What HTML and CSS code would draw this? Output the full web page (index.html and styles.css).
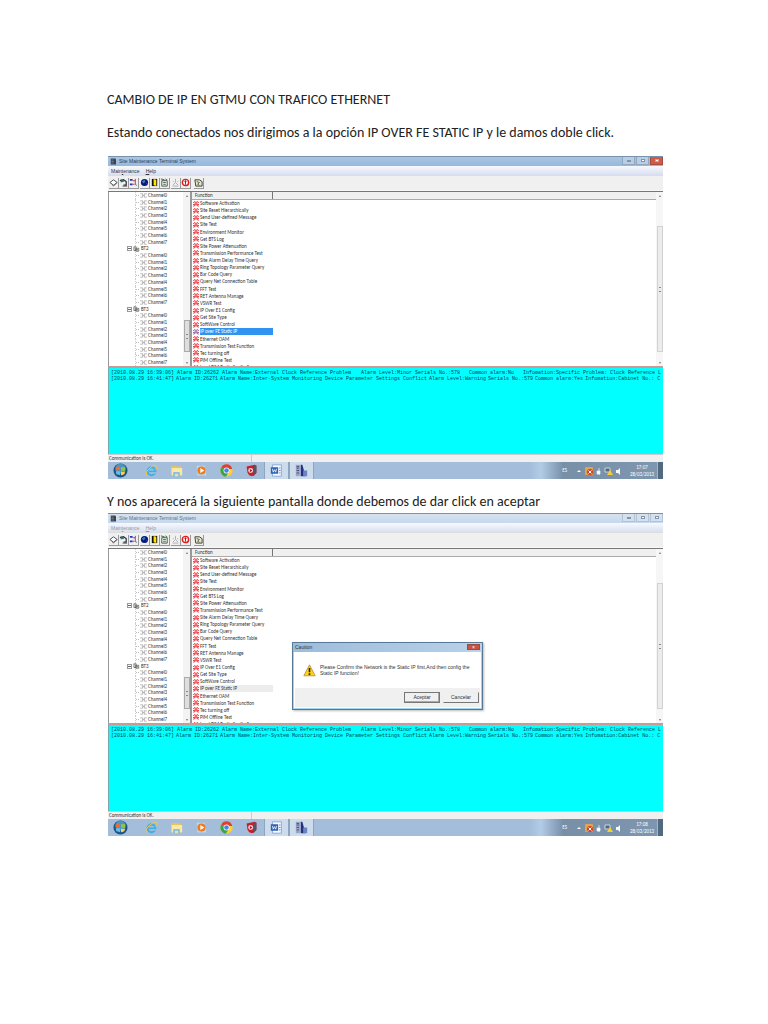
FILE: index.html
```
<!DOCTYPE html>
<html lang="es">
<head>
<meta charset="utf-8">
<meta name="viewport" content="width=device-width, initial-scale=1">
<title>Cambio de IP en GTMU</title>
<link rel="stylesheet" href="styles.css">
</head>
<body>
<svg class="defs" aria-hidden="true">
  <symbol id="app" viewBox="0 0 8 8"><path d="M1 0h6l1 1v7H1z" fill="#394450"/><path d="M2 2h3M2 4h3M2 6h3" stroke="#93a1ac" stroke-width=".7"/></symbol>
  <symbol id="fn" viewBox="0 0 8 8"><path d="M.5 2.500Q1 .8 3 .8M5 .8Q7 .8 7.500 2.500M1 7.500L3.500 2h1L7 7.500M2.500 5.200h3M.5 4v1.500M7.500 4v1.500" fill="none" stroke="currentColor" stroke-width="1.300"/></symbol>
  <symbol id="chan" viewBox="0 0 8 6"><path d="M0 1h3M0 5h3M5 1h3M5 5h3M3 3h2M3 1v4M5 1v4" fill="none" stroke="#9a9a9a" stroke-width=".8"/></symbol>
  <symbol id="site" viewBox="0 0 8 8"><path d="M.5 1h3v5h-3zM3 3h4v4H3z" fill="#ddd" stroke="#444" stroke-width=".8"/><path d="M4 5h2" stroke="#222" stroke-width=".7"/></symbol>
  <symbol id="t0" viewBox="0 0 10 10"><path d="M1 5l4-3 4 3-4 3z" fill="#fff" stroke="#444"/><path d="M3 7l2 2 4-4" fill="none" stroke="#667"/></symbol>
  <symbol id="t1" viewBox="0 0 10 10"><path d="M1 3l4-1 3 2v4H5" fill="none" stroke="#333" stroke-width="1.4"/><path d="M2 1l4 3-4 1z" fill="#178"/><path d="M4 9h5" stroke="#444"/></symbol>
  <symbol id="t2" viewBox="0 0 10 10"><path d="M1 2h3M1 7h3" stroke="#23c" stroke-width="2"/><path d="M4 3h3M4 7h2" stroke="#d33" stroke-width="1.2"/><path d="M7 1v7M8 8h1" stroke="#557"/></symbol>
  <symbol id="t3" viewBox="0 0 10 10"><circle cx="5" cy="5" r="4" fill="#0a1680"/><path d="M2 4l3-2 1 2-2 2zM7 6l1-1v2z" fill="#38a"/></symbol>
  <symbol id="t4" viewBox="0 0 10 10"><path d="M2 1h6v8H2z" fill="#111"/><path d="M4 1l3 1v7l-3-1z" fill="#ffe400"/></symbol>
  <symbol id="t5" viewBox="0 0 10 10"><path d="M2 3h6v6H2z" fill="#efe" stroke="#444"/><path d="M1 1l4 1M6 1l2 1M3.500 5h3M3.500 7h3" stroke="#363"/></symbol>
  <symbol id="t6" viewBox="0 0 10 10"><path d="M5 1v4M2 8l3-3 3 3M2 4h1M7 4h1M2 9h6" stroke="#aaa" fill="none"/></symbol>
  <symbol id="t7" viewBox="0 0 10 10"><circle cx="5" cy="5" r="3.500" fill="#fff" stroke="#e01c1c" stroke-width="1.600"/><path d="M5 2.500v5M3.800 4h2.400" stroke="#c00"/></symbol>
  <symbol id="t8" viewBox="0 0 10 10"><path d="M1 2h5l3 2v5H2z" fill="#e8e8c8" stroke="#333"/><path d="M3 4l3 1-2 2 2 1" fill="none" stroke="#554"/></symbol>
  <symbol id="start" viewBox="0 0 16 16"><circle cx="8" cy="8" r="7.500" fill="#1b5688"/><circle cx="8" cy="6" r="5.500" fill="#4c94c4"/><path d="M3 5q2-2 4.500-1v4Q5 7 3 8z" fill="#ee6b35"/><path d="M8.500 4q2 1 4.500 0v4q-2 1-4.500 0z" fill="#8ec63f"/><path d="M3 9q2-1 4.500 0v4Q5 12 3.500 12z" fill="#63bdf0"/><path d="M8.500 9q2 1 4.500 0l-1 3q-2 1-3.500 1z" fill="#fbd04a"/></symbol>
  <symbol id="ie" viewBox="0 0 16 16"><circle cx="8" cy="9" r="4.800" fill="none" stroke="#42aee6" stroke-width="2.600"/><path d="M4 9h9" stroke="#42aee6" stroke-width="2"/><path d="M10 11h5" stroke="#a7c1dc" stroke-width="1.600"/><path d="M2 14Q0 10 6 5t8-3q2 1-1 5" fill="none" stroke="#f0c944" stroke-width="1.200"/></symbol>
  <symbol id="folder" viewBox="0 0 16 16"><path d="M1 3l6-1 1 1h6v11H2z" fill="#e9c35d"/><path d="M2 5h13v9H2z" fill="#fbe9a6"/><path d="M4 10h8v5H4z" fill="#77bde4"/><path d="M6 12h4v3H6z" fill="#f5e09a"/></symbol>
  <symbol id="play" viewBox="0 0 16 16"><path d="M2 2h10l2 12H3z" fill="#b9d8ef"/><circle cx="8" cy="8" r="5" fill="#f07a1c"/><path d="M6.500 5l5 3-5 3z" fill="#fff"/></symbol>
  <symbol id="chrome" viewBox="0 0 16 16"><circle cx="8" cy="8" r="7.500" fill="#ffd02f"/><path d="M8 8L1.500 4.200A7.500 7.500 0 0 1 14.500 4.200L15 6H8z" fill="#dc4133"/><path d="M8 8l-6.500-3.800A7.500 7.500 0 0 0 7.500 15.500L10 11z" fill="#3ba44b"/><circle cx="8" cy="8" r="3.600" fill="#fff"/><circle cx="8" cy="8" r="2.800" fill="#4287e8"/></symbol>
  <symbol id="shield" viewBox="0 0 16 16"><path d="M2 3l10-2 2 1v8q-1 4-6 5-4-1-5-5z" fill="#c51f2c"/><path d="M11 2l3 0v9l-4 4z" fill="#585260"/><circle cx="7" cy="8" r="3" fill="#f2d8d8"/><path d="M6 6l3 2-3 2z" fill="#a81220"/></symbol>
  <symbol id="word" viewBox="0 0 16 16"><path d="M3 1h11v14H3z" fill="#f4f8ff" stroke="#7d9fd2"/><path d="M1 4h9v8H1z" fill="#2f62b5"/><path d="M3 6l1 4 1.500-3L7 10l1-4" fill="none" stroke="#fff"/><path d="M11 5h2M11 8h2M11 11h2" stroke="#557bbd"/></symbol>
  <symbol id="bts" viewBox="0 0 16 16"><path d="M1 1h5v14H1z" fill="#9ba5c2"/><path d="M2 3h3M2 5h3M2 8h3M2 11h3" stroke="#3a4378"/><path d="M7 1h2l4 14H7z" fill="#27307e"/><path d="M10 8h5v7h-5z" fill="#6b83c4"/></symbol>
  <symbol id="warn" viewBox="0 0 16 16"><path d="M8 1l7 13.500H1z" fill="#ffd21c" stroke="#b39529"/><path d="M8 5v5M8 11.500v2" stroke="#20202a" stroke-width="2"/></symbol>
  <symbol id="tray" viewBox="0 0 64 12"><path d="M14 7l2-2 2 2z" fill="#fff"/><rect x="22" y="2" width="8" height="8" rx="1" fill="#e2a648"/><circle cx="27" cy="7" r="3" fill="#d2402f"/><path d="M25.500 5.500l3 3m0-3l-3 3" stroke="#fff"/><path d="M36 3v7M34 6h3v3h-3z" stroke="#eef3fa" fill="#fff" stroke-width=".7"/><path d="M42 3h5v4h-5z" fill="#56697c" stroke="#e3ebf3" stroke-width=".8"/><path d="M47 5l3 5h-6z" fill="#f7cf2a"/><path d="M53 5h2l2-2v7l-2-2h-2z" fill="#f6f8fb"/></symbol>
</svg>
<main class="page">
  <p class="line">CAMBIO DE IP EN GTMU CON TRAFICO ETHERNET</p>
  <p class="line">Estando conectados nos dirigimos a la opción IP OVER FE STATIC IP y le damos doble click.</p>
  <section class="window" data-time="17:07"></section>
  <p class="line line-tight">Y nos aparecerá la siguiente pantalla donde debemos de dar click en aceptar</p>
  <section class="window inactive" data-time="17:08">
    <div class="dialog" role="dialog" aria-label="Caution">
      <header class="dialog-title"><span>Caution</span><button class="dialog-close" aria-label="Cerrar">×</button></header>
      <div class="dialog-body"><svg class="warn"><use href="#warn"/></svg><p>Please Confirm the Network is the Static IP first,And then config the<br>Static IP function!</p></div>
      <footer class="dialog-foot"><button class="btn btn-default">Aceptar</button><button class="btn">Cancelar</button></footer>
    </div>
  </section>
</main>
<script src="app.js"></script>
</body>
</html>
```

FILE: styles.css
```
* { box-sizing: border-box; }
body { margin: 0; background: #fff; color: #222; font-family: Carlito, Lato, "Open Sans", sans-serif; }
button { font: inherit; color: inherit; padding: 0; margin: 0; border: 0; background: none; }
svg { display: block; flex: none; }
.defs { position: absolute; width: 0; height: 0; }
.page { padding: 90px 105px 40px 107px; }
.line { margin: 0 0 13px; font-size: 14px; line-height: 20px; white-space: nowrap; }
.line-tight { margin: 13px 0 1px; }

.window { position: relative; margin-left: 1px; color: #333; font-family: Carlito, Lato, sans-serif; font-size: 5px; line-height: 7px; white-space: nowrap; }
.titlebar { display: flex; align-items: center; height: 10px; padding-left: 2px; gap: 3px; border-top: 1px solid #7893ad; background: linear-gradient(#a9c5e2, #97b9dc); font-family: "Liberation Sans", Arial, sans-serif; color: #2d4054; }
.titlebar svg { width: 6px; height: 7px; }
.titlebar .name { flex: 1; }
.controls { display: flex; gap: 1px; align-self: flex-start; }
.controls button { width: 13px; height: 8px; background: #b9cde3; border: 1px solid #91a9c3; border-top: 0; display: grid; place-items: center; }
.controls i { width: 4px; height: 3px; border: 1px solid #8295aa; background: #fff; }
.controls .min i { height: 2px; }
.controls .close { background: #cf5a48; border-color: #a74b42; }
.controls .close i { border-color: #e39587; }
.inactive .titlebar { background: linear-gradient(#d5e2f0, #c6d8eb); color: #65727f; }
.inactive .controls button { background: #d3e0ed; border-color: #b3c3d5; }
.inactive .controls .close i { border-color: #8295aa; }
.menubar { display: flex; gap: 6px; height: 9px; padding: 1px 3px; background: linear-gradient(#f7f9fe, #d9dff2); font-family: "Liberation Sans", Arial, sans-serif; }
.menubar button { line-height: 6px; }
.inactive .menubar { color: #999; }
.toolbar { display: flex; align-items: center; height: 16px; padding-left: 1px; background: #f0f0f0; border-top: 1px solid #ddd; border-bottom: 1px solid #f8f8f8; }
.toolbar button { width: 10px; height: 11px; display: grid; place-items: center; border-right: 1px solid #999; border-bottom: 1px solid #999; }
.toolbar button:nth-child(3n) { margin-right: 1px; }
.toolbar button:last-child { margin-left: 3px; }
.toolbar svg { width: 9px; height: 9px; }

.panes { display: flex; height: 175px; border-top: 1px solid #777; background: #fff; }
.tree { display: flex; width: 82px; border-left: 1px solid #999; overflow: hidden; }
.tree ul { flex: 1; display: grid; grid-template-rows: repeat(26, 1fr); margin: 0; padding: 0 0 0 3px; list-style: none; }
.tree li { display: flex; align-items: center; min-height: 0; gap: 1px; margin-left: 23px; border-left: 1px dotted #ccc; }
.tree li::before { content: ""; width: 3px; border-top: 1px dotted #bbb; }
.tree li svg { width: 7px; height: 5px; }
.tree .branch { margin-left: 15px; border: 0; }
.tree .branch::before { display: none; }
.tree .branch svg { width: 7px; height: 6px; }
.expander { width: 5px; height: 5px; border: 1px solid #999; display: grid; place-items: center; }
.expander::after { content: ""; width: 3px; height: 1px; background: #666; }
.scroll { width: 7px; display: flex; flex-direction: column; background: #f3f3f3; align-items: center; padding: 3px 0 2px; }
.scroll::before, .scroll::after { content: ""; border: 1px solid transparent; border-bottom: 2px solid #777; border-top: 0; }
.scroll::after { border-top: 2px solid #777; border-bottom: 0; }
.scroll span { width: 6px; border: 1px solid #aaa; background: #dedede; display: grid; place-items: center; }
.scroll span::after { content: ""; width: 2px; height: 3px; border-top: 1px solid #888; border-bottom: 1px solid #888; }
.tree .scroll span { height: 32px; margin: auto 0 10px; }
.functions { flex: 1; display: flex; min-width: 0; border-left: 2px solid #999; }
.functions .body { flex: 1; min-width: 0; overflow: hidden; }
.head { display: flex; height: 8px; background: #f0f0f0; border-bottom: 1px solid #aaa; }
.head span { width: 81px; padding-left: 3px; border-right: 1px solid #777; }
.functions ul { display: grid; grid-template-rows: repeat(23, 1fr); grid-auto-rows: 7px; height: 171px; margin: 0; padding: 0; list-style: none; }
.functions li { display: flex; align-items: center; min-height: 0; padding-left: 1px; gap: 1px; }
.functions li svg { width: 6px; height: 6px; color: #ee2028; }
.functions .selected span { width: 73px; background: #3093f0; color: #fff; }
.functions .selected svg { color: #8a4f9d; }
.inactive .selected span { background: #ececec; color: #333; }
.inactive .selected svg { color: #ee2028; }
.functions .scroll { background: #f6f6f6; }
.functions .scroll span { height: 126px; margin: auto 0 10px; border-color: #d2d2d2; background: #ececec; }

.log { height: 88px; padding: 2px; overflow: hidden; background: #0ff; border-top: 2px solid #c99; border-left: 1px solid #7aa; color: #045; font-family: "Liberation Mono", "Courier New", monospace; line-height: 6px; }
.log p { display: flex; gap: 3px; margin: 0; }
.log .second { gap: 2px; }
.log .name { min-width: 136px; }
.log .cell { min-width: 51px; }
.status { display: flex; height: 8px; border-top: 1px solid #ccc; background: #f0f0f0; }
.status span { width: 144px; padding-left: 1px; border-right: 1px solid #ccc; }
.taskbar { display: flex; align-items: center; height: 17px; background: linear-gradient(90deg, #a3bdda 0, #a3bdda 76%, #b2cce7 78%, #788fa8 82%, #7e96af 100%); }
.taskbar button { width: 25px; height: 17px; display: grid; place-items: center; }
.taskbar button svg { width: 13px; height: 13px; }
.taskbar .start svg { width: 15px; height: 15px; }
.taskbar .open { background: #cddcec; border: 1px solid #8da5bf; border-top: 0; border-bottom: 0; }
.grip { width: 5px; height: 13px; margin-right: 1px; background: radial-gradient(#71869e 35%, transparent 45%) 0 0 / 2px 2px; }
.tray { display: flex; align-items: center; align-self: stretch; margin-left: auto; gap: 2px; color: #fff; }
.tray .grip { margin-right: 2px; }
.tray svg { width: 64px; height: 12px; margin-left: -6px; }
.clock { width: 26px; text-align: center; line-height: 7px; }
.peek { width: 6px; align-self: stretch; background: #526a80; border-left: 1px solid #a4b5c8; }

.dialog { position: absolute; left: 184px; top: 129px; width: 191px; border: 1px solid #587995; background: #fff; box-shadow: inset 0 0 0 1px #9ed4ec, 1px 1px 2px #bbb; padding: 0 2px 2px; font-family: "Liberation Sans", Arial, sans-serif; }
.dialog-title { display: flex; justify-content: space-between; height: 9px; margin: 0 -2px; padding: 1px 2px; background: linear-gradient(90deg, #9dbcdb, #b9d1e9); }
.dialog-close { width: 13px; height: 6px; line-height: 5px; background: #cd5140; border: 1px solid #984b43; color: #fff; }
.dialog-body { display: flex; align-items: center; gap: 4px; height: 36px; padding-left: 8px; }
.dialog-body p { margin: 0; line-height: 6px; }
.warn { width: 13px; height: 13px; }
.dialog-foot { display: flex; justify-content: flex-end; align-items: center; gap: 3px; height: 19px; padding-right: 1px; background: #f0f0f0; }
.btn { width: 36px; height: 11px; line-height: 9px; border: 1px solid #eee; border-right-color: #777; border-bottom-color: #777; }
.btn-default { border-color: #777; box-shadow: inset -1px -1px #aaa; }
```

FILE: app.js
```
const icon = id => `<svg><use href="#${id}"/></svg>`;
const channels = Array.from({ length: 8 }, (_, i) => `<li>${icon('chan')}Channel${i}</li>`).join('');
const branch = name => `<li class="branch"><span class="expander"></span>${icon('site')}${name}</li>`;
const functions = ['Software Activation', 'Site Reset Hierarchically', 'Send User-defined Message', 'Site Test',
  'Environment Monitor', 'Get BTS Log', 'Site Power Attenuation', 'Transmission Performance Test',
  'Site Alarm Delay Time Query', 'Ring Topology Parameter Query', 'Bar Code Query', 'Query Net Connection Table',
  'FFT Test', 'RET Antenna Manage', 'VSWR Test', 'IP Over E1 Config', 'Get Site Type', 'SoftWare Control',
  'IP over FE Static IP', 'Ethernet OAM', 'Transmission Test Function', 'Tec turning off', 'PIM Offline Test',
  "Load PIM Test's Config 2"];
const tools = ['Abrir', 'Conectar', 'Sitio', 'Red', 'Salir', 'Registro', 'Antena', 'Detener', 'Ayuda'];
const tasks = [['ie', 'Internet Explorer'], ['folder', 'Explorador'], ['play', 'Reproductor'], ['chrome', 'Chrome'],
  ['shield', 'Antivirus'], ['word', 'Word', 'open'], ['bts', 'Site Maintenance', 'open']];

document.querySelectorAll('.window').forEach(win => {
  win.insertAdjacentHTML('afterbegin', `
  <header class="titlebar">${icon('app')}<span class="name">Site Maintenance Terminal System</span>
    <div class="controls"><button class="min" aria-label="Minimizar"><i></i></button><button aria-label="Restaurar"><i></i></button><button class="close" aria-label="Cerrar"><i></i></button></div></header>
  <nav class="menubar"><button>Main<u>t</u>enance</button><button><u>H</u>elp</button></nav>
  <div class="toolbar">${tools.map((t, i) => `<button aria-label="${t}">${icon('t' + i)}</button>`).join('')}</div>
  <div class="panes">
    <div class="tree"><ul>${channels}${branch('BT2')}${channels}${branch('BT3')}${channels}</ul><div class="scroll"><span></span></div></div>
    <div class="functions"><div class="body"><div class="head"><span>Function</span></div>
      <ul>${functions.map(f => `<li${f === 'IP over FE Static IP' ? ' class="selected"' : ''}>${icon('fn')}<span>${f}</span></li>`).join('')}</ul></div>
      <div class="scroll"><span></span></div></div>
  </div>
  <div class="log">
    <p><span>[2010.08.29 16:39:06]</span><span>Alarm ID:26262</span><span class="name">Alarm Name:External Clock Reference Problem</span><span class="cell">Alarm Level:Minor</span><span class="cell">Serials No.:578</span><span class="cell">Common alarm:No</span><span>Infomation:Specific Problem: Clock Reference L</span></p>
    <p class="second"><span>[2010.08.29 16:41:47]</span><span>Alarm ID:26271</span><span>Alarm Name:Inter-System Monitoring Device Parameter Settings Conflict</span><span>Alarm Level:Warning</span><span>Serials No.:579</span><span>Common alarm:Yes</span><span>Infomation:Cabinet No.: C</span></p>
  </div>
  <div class="status"><span>Communication is OK.</span></div>
  <footer class="taskbar"><button class="start" aria-label="Inicio">${icon('start')}</button><span class="grip"></span>
    ${tasks.map(([id, label, cls = '']) => `<button class="${cls}" aria-label="${label}">${icon(id)}</button>`).join('')}
    <div class="tray"><span class="grip"></span><span>ES</span>${icon('tray')}<span class="clock">${win.dataset.time}<br>28/03/2013</span><span class="peek"></span></div></footer>`);
});
```
